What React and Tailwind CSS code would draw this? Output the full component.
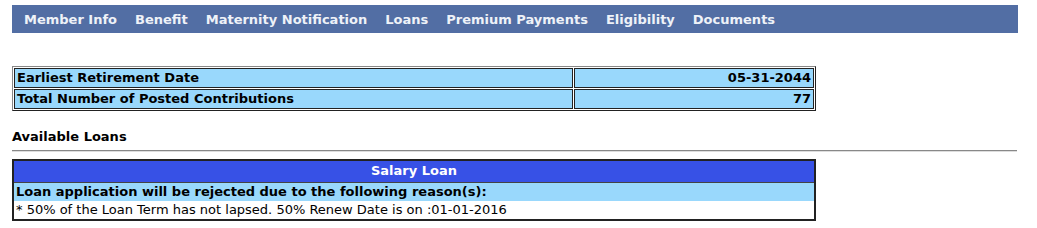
import React from "react";

const NAV = [
  "Member Info",
  "Benefit",
  "Maternity Notification",
  "Loans",
  "Premium Payments",
  "Eligibility",
  "Documents",
];

export default function App() {
  return (
    <div className="w-[1037px] h-[228px] bg-white text-[13px] text-black font-['Verdana','DejaVu_Sans',sans-serif] overflow-hidden">
      {/* NAV BAR */}
      <div className="pt-[5px] pl-[12px] pr-[19px]">
        <div className="h-[28px] bg-[#526ea4] flex items-center pt-[2px] pl-[12px] gap-[18px] font-bold text-[#eef2f8]">
          {NAV.map((n) => (
            <span key={n}>{n}</span>
          ))}
        </div>
      </div>

      <div className="pl-[12px] pr-[20px] pt-[33px]">
        {/* SUMMARY TABLE */}
        <table className="w-[804px] border-separate border-spacing-[1px] border border-t-[#888] border-l-[#888] border-r-[#222] border-b-[#222] font-bold">
          <tbody>
            <tr>
              <td className="bg-[#99d8fc] border border-[#222] h-[20px] px-[2px] leading-[16px]">
                Earliest Retirement Date
              </td>
              <td className="bg-[#99d8fc] border border-[#222] h-[20px] px-[2px] text-right w-[240px] leading-[16px]">
                05-31-2044
              </td>
            </tr>
            <tr>
              <td className="bg-[#99d8fc] border border-[#222] h-[20px] px-[2px] leading-[16px]">
                Total Number of Posted Contributions
              </td>
              <td className="bg-[#99d8fc] border border-[#222] h-[20px] px-[2px] text-right leading-[16px]">
                77
              </td>
            </tr>
          </tbody>
        </table>

        {/* AVAILABLE LOANS */}
        <div className="font-bold mt-[18px] leading-[16px]">Available Loans</div>
        <div className="mt-[5px] h-[2px] border-t border-[#888] border-b border-b-[#ddd]" />

        <table className="mt-[7px] w-[804px] border-collapse border-2 border-[#222]">
          <tbody>
            <tr>
              <td className="bg-[#3751e6] text-white font-bold text-center h-[22px] leading-[16px] border-t border-t-[#8a97d8] border-b border-b-[#444]">
                Salary Loan
              </td>
            </tr>
            <tr>
              <td className="bg-[#99d8fc] font-bold h-[19px] px-[2px] leading-[16px]">
                Loan application will be rejected due to the following reason(s):
              </td>
            </tr>
            <tr>
              <td className="bg-white h-[19px] px-[2px] leading-[16px]">
                * 50% of the Loan Term has not lapsed. 50% Renew Date is on :01-01-2016
              </td>
            </tr>
          </tbody>
        </table>
      </div>
    </div>
  );
}
